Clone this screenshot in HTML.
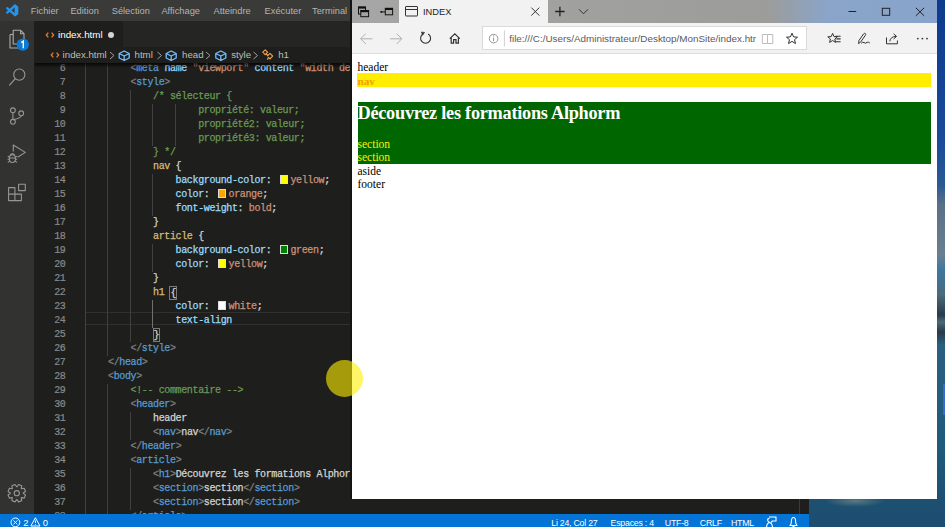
<!DOCTYPE html>
<html><head><meta charset="utf-8">
<style>
*{margin:0;padding:0;box-sizing:border-box}
html,body{width:945px;height:527px;overflow:hidden;position:relative;background:#1d4a6a;font-family:"Liberation Sans",sans-serif}
.a{position:absolute}
#wall{left:808px;top:0;width:137px;height:527px;background:radial-gradient(ellipse 30px 6px at 855px 501px,rgba(150,160,150,0.5),rgba(150,160,150,0) 100%),linear-gradient(180deg,#0d3a8e 0px,#1a4a9a 140px,#2a5a92 185px,#5a7088 205px,#6a7f8e 255px,#3e78a0 270px,#4a6a7a 295px,#2a3a4a 315px,#4a6a78 322px,#2a3a48 332px,#2a6080 345px,#1e5a7a 450px,#1d5070 499px,#1e4d70 527px);background-position:-808px 0,0 0;background-size:945px 527px,137px 527px;background-repeat:no-repeat}
#wall2{left:943px;top:384px;width:2px;height:31px;background:#3a68d0}
#vsc{left:0;top:0;width:808.6px;height:527px;background:#1e1f1c;overflow:hidden}
#title{left:0;top:0;width:808.6px;height:21px;background:#3a3b38}
.menu{top:0;height:22px;line-height:22px;font-size:9.3px;color:#b4b4b4}
#act{left:0;top:21px;width:34.4px;height:493px;background:#323330}
#tabs{left:34.4px;top:21px;width:775px;height:26px;background:#252623}
#tab1{left:34.4px;top:21px;width:88.6px;height:26px;background:#1e1f1c}
#crumbs{left:34.5px;top:47px;width:774px;height:16px;background:#1e1f1c}
#status{left:0;top:513.7px;width:808.6px;height:22px;background:#0474d6;color:#fff;font-size:8.2px}
.st{line-height:10px;font-size:8.8px;letter-spacing:-0.25px;color:#fff;white-space:nowrap}
.crumb{top:47px;height:16px;line-height:16px;font-size:9.7px;color:#bdbdbd;white-space:nowrap}
#editor{left:34.5px;top:63px;width:774px;height:451px;overflow:hidden}
.ln{position:absolute;left:0;width:31px;text-align:right;font-family:"Liberation Mono",monospace;font-size:10px;letter-spacing:-0.37px;color:#8a8a8a;-webkit-text-stroke:0.2px currentColor;height:14px;line-height:14px}
.cl{position:absolute;left:51px;white-space:pre;-webkit-text-stroke:0.25px currentColor;font-family:"Liberation Mono",monospace;font-size:10px;letter-spacing:-0.37px;color:#d4d4d4;height:14px;line-height:14px}
.g{position:absolute;width:1px;background:#404040}
.t{color:#808080}.n{color:#569cd6}.at{color:#9cdcfe}.s{color:#ce9178}.c{color:#6a9955}.se{color:#d7ba7d}.p{color:#9cdcfe}.v{color:#ce9178}
.sw{display:inline-block;width:8.3px;height:8.3px;border:1px solid #ddd;vertical-align:-1px;margin:0 2.6px 0 2.6px}
.bm{display:inline-block;height:14px;line-height:13px;vertical-align:top;border:1px solid #7a7a7a;margin:0 -1px 0 -0.5px;padding:0}
.act{color:#858585}
#browser{left:352px;top:0;width:585px;height:499px;background:#ffffff;overflow:hidden}
#btitle{left:0;top:0;width:585px;height:23px;background:linear-gradient(90deg,#a6a6a6 0%,#a0a09e 40%,#9c9c9a 71%,#8aa5c8 81%,#88a4cc 100%)}
#btab{left:47px;top:0;width:149px;height:23px;background:#f2f2f2}
#btool{left:0;top:23px;width:585px;height:30.5px;background:#f2f2f2;border-bottom:1px solid #dcdcdc}
#addr{left:129.6px;top:26px;width:325.4px;height:23.8px;background:#fff;border:1px solid #dadada}
.pg{position:absolute;left:5.5px;font-family:"Liberation Serif",serif;font-size:11.5px;line-height:14px;white-space:nowrap;color:#000}
</style></head><body>
<div id="wall" class="a"></div><div id="wall2" class="a"></div>
<div id="vsc" class="a">
  <div id="title" class="a"></div>
  <div class="a menu" style="left:30.8px">Fichier</div>
  <div class="a menu" style="left:70.4px">Edition</div>
  <div class="a menu" style="left:111.7px">Sélection</div>
  <div class="a menu" style="left:161.4px">Affichage</div>
  <div class="a menu" style="left:213.5px">Atteindre</div>
  <div class="a menu" style="left:264.6px">Exécuter</div>
  <div class="a menu" style="left:312px">Terminal</div>
  <div id="act" class="a"></div>
  <div id="tabs" class="a"></div>
  <div id="tab1" class="a"></div>
  <div id="crumbs" class="a"></div>
  <div id="editor" class="a">
<div style="position:absolute;left:51px;top:249.4px;width:720px;height:13px;border-top:1px solid #303030;border-bottom:1px solid #303030"></div>
<div class="g" style="left:50.3px;top:-1.5px;height:14px;background:#404040"></div>
<div class="g" style="left:72.8px;top:-1.5px;height:14px;background:#404040"></div>
<div class="g" style="left:50.3px;top:12.5px;height:14px;background:#404040"></div>
<div class="g" style="left:72.8px;top:12.5px;height:14px;background:#404040"></div>
<div class="g" style="left:50.3px;top:26.5px;height:14px;background:#404040"></div>
<div class="g" style="left:72.8px;top:26.5px;height:14px;background:#404040"></div>
<div class="g" style="left:95.3px;top:26.5px;height:14px;background:#404040"></div>
<div class="g" style="left:50.3px;top:40.5px;height:14px;background:#404040"></div>
<div class="g" style="left:72.8px;top:40.5px;height:14px;background:#404040"></div>
<div class="g" style="left:95.3px;top:40.5px;height:14px;background:#404040"></div>
<div class="g" style="left:117.9px;top:40.5px;height:14px;background:#404040"></div>
<div class="g" style="left:140.4px;top:40.5px;height:14px;background:#404040"></div>
<div class="g" style="left:50.3px;top:54.5px;height:14px;background:#404040"></div>
<div class="g" style="left:72.8px;top:54.5px;height:14px;background:#404040"></div>
<div class="g" style="left:95.3px;top:54.5px;height:14px;background:#404040"></div>
<div class="g" style="left:117.9px;top:54.5px;height:14px;background:#404040"></div>
<div class="g" style="left:140.4px;top:54.5px;height:14px;background:#404040"></div>
<div class="g" style="left:50.3px;top:68.5px;height:14px;background:#404040"></div>
<div class="g" style="left:72.8px;top:68.5px;height:14px;background:#404040"></div>
<div class="g" style="left:95.3px;top:68.5px;height:14px;background:#404040"></div>
<div class="g" style="left:117.9px;top:68.5px;height:14px;background:#404040"></div>
<div class="g" style="left:140.4px;top:68.5px;height:14px;background:#404040"></div>
<div class="g" style="left:50.3px;top:82.5px;height:14px;background:#404040"></div>
<div class="g" style="left:72.8px;top:82.5px;height:14px;background:#404040"></div>
<div class="g" style="left:95.3px;top:82.5px;height:14px;background:#404040"></div>
<div class="g" style="left:50.3px;top:96.5px;height:14px;background:#404040"></div>
<div class="g" style="left:72.8px;top:96.5px;height:14px;background:#404040"></div>
<div class="g" style="left:95.3px;top:96.5px;height:14px;background:#404040"></div>
<div class="g" style="left:50.3px;top:110.5px;height:14px;background:#404040"></div>
<div class="g" style="left:72.8px;top:110.5px;height:14px;background:#404040"></div>
<div class="g" style="left:95.3px;top:110.5px;height:14px;background:#404040"></div>
<div class="g" style="left:117.9px;top:110.5px;height:14px;background:#404040"></div>
<div class="g" style="left:50.3px;top:124.5px;height:14px;background:#404040"></div>
<div class="g" style="left:72.8px;top:124.5px;height:14px;background:#404040"></div>
<div class="g" style="left:95.3px;top:124.5px;height:14px;background:#404040"></div>
<div class="g" style="left:117.9px;top:124.5px;height:14px;background:#404040"></div>
<div class="g" style="left:50.3px;top:138.5px;height:14px;background:#404040"></div>
<div class="g" style="left:72.8px;top:138.5px;height:14px;background:#404040"></div>
<div class="g" style="left:95.3px;top:138.5px;height:14px;background:#404040"></div>
<div class="g" style="left:117.9px;top:138.5px;height:14px;background:#404040"></div>
<div class="g" style="left:50.3px;top:152.5px;height:14px;background:#404040"></div>
<div class="g" style="left:72.8px;top:152.5px;height:14px;background:#404040"></div>
<div class="g" style="left:95.3px;top:152.5px;height:14px;background:#404040"></div>
<div class="g" style="left:50.3px;top:166.5px;height:14px;background:#404040"></div>
<div class="g" style="left:72.8px;top:166.5px;height:14px;background:#404040"></div>
<div class="g" style="left:95.3px;top:166.5px;height:14px;background:#404040"></div>
<div class="g" style="left:50.3px;top:180.5px;height:14px;background:#404040"></div>
<div class="g" style="left:72.8px;top:180.5px;height:14px;background:#404040"></div>
<div class="g" style="left:95.3px;top:180.5px;height:14px;background:#404040"></div>
<div class="g" style="left:117.9px;top:180.5px;height:14px;background:#404040"></div>
<div class="g" style="left:50.3px;top:194.5px;height:14px;background:#404040"></div>
<div class="g" style="left:72.8px;top:194.5px;height:14px;background:#404040"></div>
<div class="g" style="left:95.3px;top:194.5px;height:14px;background:#404040"></div>
<div class="g" style="left:117.9px;top:194.5px;height:14px;background:#404040"></div>
<div class="g" style="left:50.3px;top:208.5px;height:14px;background:#404040"></div>
<div class="g" style="left:72.8px;top:208.5px;height:14px;background:#404040"></div>
<div class="g" style="left:95.3px;top:208.5px;height:14px;background:#404040"></div>
<div class="g" style="left:50.3px;top:222.5px;height:14px;background:#404040"></div>
<div class="g" style="left:72.8px;top:222.5px;height:14px;background:#404040"></div>
<div class="g" style="left:95.3px;top:222.5px;height:14px;background:#404040"></div>
<div class="g" style="left:50.3px;top:236.5px;height:14px;background:#404040"></div>
<div class="g" style="left:72.8px;top:236.5px;height:14px;background:#404040"></div>
<div class="g" style="left:95.3px;top:236.5px;height:14px;background:#404040"></div>
<div class="g" style="left:117.9px;top:236.5px;height:14px;background:#707070"></div>
<div class="g" style="left:50.3px;top:250.5px;height:14px;background:#404040"></div>
<div class="g" style="left:72.8px;top:250.5px;height:14px;background:#404040"></div>
<div class="g" style="left:95.3px;top:250.5px;height:14px;background:#404040"></div>
<div class="g" style="left:117.9px;top:250.5px;height:14px;background:#707070"></div>
<div class="g" style="left:50.3px;top:264.5px;height:14px;background:#404040"></div>
<div class="g" style="left:72.8px;top:264.5px;height:14px;background:#404040"></div>
<div class="g" style="left:95.3px;top:264.5px;height:14px;background:#404040"></div>
<div class="g" style="left:50.3px;top:278.5px;height:14px;background:#404040"></div>
<div class="g" style="left:72.8px;top:278.5px;height:14px;background:#404040"></div>
<div class="g" style="left:50.3px;top:292.5px;height:14px;background:#404040"></div>
<div class="g" style="left:50.3px;top:306.5px;height:14px;background:#404040"></div>
<div class="g" style="left:50.3px;top:320.5px;height:14px;background:#404040"></div>
<div class="g" style="left:72.8px;top:320.5px;height:14px;background:#404040"></div>
<div class="g" style="left:50.3px;top:334.5px;height:14px;background:#404040"></div>
<div class="g" style="left:72.8px;top:334.5px;height:14px;background:#404040"></div>
<div class="g" style="left:50.3px;top:348.5px;height:14px;background:#404040"></div>
<div class="g" style="left:72.8px;top:348.5px;height:14px;background:#404040"></div>
<div class="g" style="left:95.3px;top:348.5px;height:14px;background:#404040"></div>
<div class="g" style="left:50.3px;top:362.5px;height:14px;background:#404040"></div>
<div class="g" style="left:72.8px;top:362.5px;height:14px;background:#404040"></div>
<div class="g" style="left:95.3px;top:362.5px;height:14px;background:#404040"></div>
<div class="g" style="left:50.3px;top:376.5px;height:14px;background:#404040"></div>
<div class="g" style="left:72.8px;top:376.5px;height:14px;background:#404040"></div>
<div class="g" style="left:50.3px;top:390.5px;height:14px;background:#404040"></div>
<div class="g" style="left:72.8px;top:390.5px;height:14px;background:#404040"></div>
<div class="g" style="left:50.3px;top:404.5px;height:14px;background:#404040"></div>
<div class="g" style="left:72.8px;top:404.5px;height:14px;background:#404040"></div>
<div class="g" style="left:95.3px;top:404.5px;height:14px;background:#404040"></div>
<div class="g" style="left:50.3px;top:418.5px;height:14px;background:#404040"></div>
<div class="g" style="left:72.8px;top:418.5px;height:14px;background:#404040"></div>
<div class="g" style="left:95.3px;top:418.5px;height:14px;background:#404040"></div>
<div class="g" style="left:50.3px;top:432.5px;height:14px;background:#404040"></div>
<div class="g" style="left:72.8px;top:432.5px;height:14px;background:#404040"></div>
<div class="g" style="left:95.3px;top:432.5px;height:14px;background:#404040"></div>
<div class="g" style="left:50.3px;top:446.5px;height:14px;background:#404040"></div>
<div class="g" style="left:72.8px;top:446.5px;height:14px;background:#404040"></div>
<div class="ln" style="top:-1.5px">6</div>
<div class="cl" style="top:-1.5px">        <span class="t">&lt;</span><span class="n">meta</span> <span class="at">name</span> <span class="s">&quot;viewport&quot;</span> <span class="at">content</span> <span class="s">&quot;width de</span></div>
<div class="ln" style="top:12.5px">7</div>
<div class="cl" style="top:12.5px">        <span class="t">&lt;</span><span class="n">style</span><span class="t">&gt;</span></div>
<div class="ln" style="top:26.5px">8</div>
<div class="cl" style="top:26.5px">            <span class="c">/* sélecteur {</span></div>
<div class="ln" style="top:40.5px">9</div>
<div class="cl" style="top:40.5px">                    <span class="c">propriété: valeur;</span></div>
<div class="ln" style="top:54.5px">10</div>
<div class="cl" style="top:54.5px">                    <span class="c">propriété2: valeur;</span></div>
<div class="ln" style="top:68.5px">11</div>
<div class="cl" style="top:68.5px">                    <span class="c">propriété3: valeur;</span></div>
<div class="ln" style="top:82.5px">12</div>
<div class="cl" style="top:82.5px">            <span class="c">} */</span></div>
<div class="ln" style="top:96.5px">13</div>
<div class="cl" style="top:96.5px">            <span class="se">nav</span> {</div>
<div class="ln" style="top:110.5px">14</div>
<div class="cl" style="top:110.5px">                <span class="p">background-color</span>: <span class="sw" style="background:#ffff00"></span><span class="v">yellow</span>;</div>
<div class="ln" style="top:124.5px">15</div>
<div class="cl" style="top:124.5px">                <span class="p">color</span>: <span class="sw" style="background:#ffa500"></span><span class="v">orange</span>;</div>
<div class="ln" style="top:138.5px">16</div>
<div class="cl" style="top:138.5px">                <span class="p">font-weight</span>: <span class="v">bold</span>;</div>
<div class="ln" style="top:152.5px">17</div>
<div class="cl" style="top:152.5px">            }</div>
<div class="ln" style="top:166.5px">18</div>
<div class="cl" style="top:166.5px">            <span class="se">article</span> {</div>
<div class="ln" style="top:180.5px">19</div>
<div class="cl" style="top:180.5px">                <span class="p">background-color</span>: <span class="sw" style="background:#008000"></span><span class="v">green</span>;</div>
<div class="ln" style="top:194.5px">20</div>
<div class="cl" style="top:194.5px">                <span class="p">color</span>: <span class="sw" style="background:#ffff00"></span><span class="v">yellow</span>;</div>
<div class="ln" style="top:208.5px">21</div>
<div class="cl" style="top:208.5px">            }</div>
<div class="ln" style="top:222.5px">22</div>
<div class="cl" style="top:222.5px">            <span class="se">h1</span> <span class="bm">{</span></div>
<div class="ln" style="top:236.5px">23</div>
<div class="cl" style="top:236.5px">                <span class="p">color</span>: <span class="sw" style="background:#ffffff"></span><span class="v">white</span>;</div>
<div class="ln act" style="top:250.5px">24</div>
<div class="cl" style="top:250.5px">                <span class="p">text-align</span></div>
<div class="ln" style="top:264.5px">25</div>
<div class="cl" style="top:264.5px">            <span class="bm">}</span></div>
<div class="ln" style="top:278.5px">26</div>
<div class="cl" style="top:278.5px">        <span class="t">&lt;/</span><span class="n">style</span><span class="t">&gt;</span></div>
<div class="ln" style="top:292.5px">27</div>
<div class="cl" style="top:292.5px">    <span class="t">&lt;/</span><span class="n">head</span><span class="t">&gt;</span></div>
<div class="ln" style="top:306.5px">28</div>
<div class="cl" style="top:306.5px">    <span class="t">&lt;</span><span class="n">body</span><span class="t">&gt;</span></div>
<div class="ln" style="top:320.5px">29</div>
<div class="cl" style="top:320.5px">        <span class="c">&lt;!-- commentaire --&gt;</span></div>
<div class="ln" style="top:334.5px">30</div>
<div class="cl" style="top:334.5px">        <span class="t">&lt;</span><span class="n">header</span><span class="t">&gt;</span></div>
<div class="ln" style="top:348.5px">31</div>
<div class="cl" style="top:348.5px">            header</div>
<div class="ln" style="top:362.5px">32</div>
<div class="cl" style="top:362.5px">            <span class="t">&lt;</span><span class="n">nav</span><span class="t">&gt;</span>nav<span class="t">&lt;/</span><span class="n">nav</span><span class="t">&gt;</span></div>
<div class="ln" style="top:376.5px">33</div>
<div class="cl" style="top:376.5px">        <span class="t">&lt;/</span><span class="n">header</span><span class="t">&gt;</span></div>
<div class="ln" style="top:390.5px">34</div>
<div class="cl" style="top:390.5px">        <span class="t">&lt;</span><span class="n">article</span><span class="t">&gt;</span></div>
<div class="ln" style="top:404.5px">35</div>
<div class="cl" style="top:404.5px">            <span class="t">&lt;</span><span class="n">h1</span><span class="t">&gt;</span>Découvrez les formations Alphorm</div>
<div class="ln" style="top:418.5px">36</div>
<div class="cl" style="top:418.5px">            <span class="t">&lt;</span><span class="n">section</span><span class="t">&gt;</span>section<span class="t">&lt;/</span><span class="n">section</span><span class="t">&gt;</span></div>
<div class="ln" style="top:432.5px">37</div>
<div class="cl" style="top:432.5px">            <span class="t">&lt;</span><span class="n">section</span><span class="t">&gt;</span>section<span class="t">&lt;/</span><span class="n">section</span><span class="t">&gt;</span></div>
<div class="ln" style="top:446.5px">38</div>
<div class="cl" style="top:446.5px">        <span class="t">&lt;/</span><span class="n">article</span><span class="t">&gt;</span></div>
</div>
  <div class="a" style="left:34.5px;top:63px;width:774px;height:5px;background:linear-gradient(180deg,rgba(0,0,0,0.75),rgba(0,0,0,0))"></div>
  <div id="status" class="a"></div>
  <svg class="a" style="left:0;top:514px" width="60" height="13" viewBox="0 514 60 13">
    <g fill="none" stroke="#fff" stroke-width="1">
      <circle cx="15.4" cy="522.4" r="4.4"/>
      <path d="M13.4 520.4 L17.4 524.4 M17.4 520.4 L13.4 524.4"/>
      <path d="M35.4 517.8 L40 526 H30.8 Z"/>
      <path d="M35.4 520.5 V523 M35.4 524 V524.8"/>
    </g>
  </svg>
  <div class="a st" style="left:23.2px;top:518.3px;font-size:9.5px;color:#fff">2</div>
  <div class="a st" style="left:42.7px;top:518.3px;font-size:9.5px;color:#fff">0</div>
  <div class="a st" style="left:551.3px;top:518.3px">Li 24, Col 27</div>
  <div class="a st" style="left:610.6px;top:518.3px">Espaces : 4</div>
  <div class="a st" style="left:664.8px;top:518.3px">UTF-8</div>
  <div class="a st" style="left:699.8px;top:518.3px">CRLF</div>
  <div class="a st" style="left:731px;top:518.3px">HTML</div>
  <svg class="a" style="left:760px;top:514px" width="45" height="13" viewBox="760 514 45 13">
    <g fill="none" stroke="#fff" stroke-width="1.1" stroke-linejoin="round">
      <path d="M769 517 H776 V521 H772.5 L771 522.5"/>
      <path d="M766.5 527 Q767 523 769.5 522.5 Q772 523 772.5 527 M769.5 522 A1.9 1.9 0 1 1 769.5 518.2"/>
      <path d="M790 525.5 H797 Q795.6 524 795.6 521.5 Q795.6 517.5 793.5 517.5 Q791.4 517.5 791.4 521.5 Q791.4 524 790 525.5 Z M792.5 526.5 H794.5"/>
    </g>
  </svg>
  <div class="a" style="left:799px;top:499px;width:1px;height:15px;background:#3a3a3a"></div>

  <svg class="a" style="left:0;top:0" width="35" height="514" viewBox="0 0 35 514">
    <g fill="#2496ed">
      <path d="M14.6 4.6 L17.2 5.8 Q18.3 6.4 18.3 7.6 L18.3 13.2 Q18.3 14.4 17.2 15 L14.6 16.2 Z"/>
    </g>
    <g stroke="#2496ed" stroke-width="2.2" stroke-linecap="round" fill="none">
      <path d="M15.2 5.4 L7.2 12.6"/>
      <path d="M7.2 8.2 L15.2 15.2"/>
    </g>
    <g fill="none" stroke="#969696" stroke-width="1.1" stroke-linejoin="round">
      <path d="M13.2 30.3 H20.6 L24 33.7 V44 H13.2 Z" stroke="#aaaaaa"/>
      <path d="M20.6 30.3 V33.7 H24" stroke="#aaaaaa"/>
      <path d="M10 34.5 V48 H19.5" stroke="#aaaaaa"/>
      <path d="M10 34.5 H13.2" stroke="#aaaaaa"/>
      <circle cx="19.3" cy="74.6" r="5.6"/>
      <path d="M15.3 78.6 L9.3 85.4" stroke-width="1.3"/>
      <circle cx="12.9" cy="110.3" r="2.4"/>
      <circle cx="21.2" cy="113.3" r="2.4"/>
      <circle cx="12.9" cy="121.8" r="2.4"/>
      <path d="M12.9 112.7 V119.4"/>
      <path d="M21.2 115.7 Q21 118 13.4 119.6"/>
      <path d="M13.3 151.5 V145 L25.3 152.4 L17.6 157.2"/>
      <ellipse cx="12.4" cy="158.6" rx="3.1" ry="3.9"/>
      <path d="M10.2 155.2 Q12.4 152.6 14.6 155.2 M7.8 156.2 L9.4 157 M17 156.2 L15.4 157 M7.6 159.2 H9.3 M17.2 159.2 H15.5 M7.8 162.4 L9.6 161.2 M17 162.4 L15.2 161.2 M9.6 158 H15.2"/>
      <path d="M8.6 187.6 H14.9 V200.6 H8.6 Z M8.6 194.1 H21.4 V200.6 H14.9"/>
      <path d="M18.6 184.3 H25.3 V190.6 H18.6 Z"/>
    </g>
    <circle cx="22.8" cy="44.6" r="6.2" fill="#0e7ad3"/>
    <path d="M21.3 42.6 L23.3 41.1 V48.2" fill="none" stroke="#fff" stroke-width="1.4"/>
    <g transform="translate(16.8 493.2)" fill="none" stroke="#969696" stroke-width="1.1">
      <circle r="2.6"/>
      <path d="M6.40 0.17 L8.72 1.77 L7.42 4.91 L4.64 4.41 L4.41 4.64 L4.91 7.42 L1.77 8.72 L0.17 6.40 L-0.17 6.40 L-1.77 8.72 L-4.91 7.42 L-4.41 4.64 L-4.64 4.41 L-7.42 4.91 L-8.72 1.77 L-6.40 0.17 L-6.40 -0.17 L-8.72 -1.77 L-7.42 -4.91 L-4.64 -4.41 L-4.41 -4.64 L-4.91 -7.42 L-1.77 -8.72 L-0.17 -6.40 L0.17 -6.40 L1.77 -8.72 L4.91 -7.42 L4.41 -4.64 L4.64 -4.41 L7.42 -4.91 L8.72 -1.77 L6.40 -0.17 Z" stroke-linejoin="round"/>
    </g>
  </svg>
  <svg class="a" style="left:44px;top:29.5px" width="12" height="10" viewBox="0 0 12 10"><path d="M4.3 2.6 L2.3 5 L4.3 7.4 M7.6 2.6 L9.6 5 L7.6 7.4" fill="none" stroke="#e37933" stroke-width="1.35"/></svg>
  <div class="a" style="left:58px;top:22px;height:25px;line-height:25px;font-size:9.8px;color:#ffffff">index.html</div>
  <div class="a" style="left:108px;top:31.5px;width:6px;height:6px;border-radius:50%;background:#d4d4d4"></div>
  <svg class="a" style="left:48.5px;top:50.3px" width="12" height="10" viewBox="0 0 12 10"><path d="M4.3 2.6 L2.3 5 L4.3 7.4 M7.6 2.6 L9.6 5 L7.6 7.4" fill="none" stroke="#e37933" stroke-width="1.35"/></svg>
  <div class="a crumb" style="left:62.6px">index.html</div>
  <div class="a crumb" style="left:134.5px">html</div>
  <div class="a crumb" style="left:182.1px">head</div>
  <div class="a crumb" style="left:231.2px">style</div>
  <div class="a crumb" style="left:278.2px">h1</div>
  <svg class="a" style="left:0;top:45px" width="352" height="20" viewBox="0 45 352 20">
    <g fill="none" stroke="#a0a0a0" stroke-width="1">
      <path d="M110 52 L114 55.5 L110 59 M157.5 52 L161.5 55.5 L157.5 59 M206 52 L210 55.5 L206 59 M253.5 52 L257.5 55.5 L253.5 59"/>
    </g>
    <g fill="none" stroke="#75beff" stroke-width="1.3" stroke-linejoin="round">
      <path d="M119.2 53.5 L124.2 51 L129.2 53.5 V58 L124.2 60.5 L119.2 58 Z M119.2 53.5 L124.2 56 L129.2 53.5 M124.2 56 V60.5"/>
      <path d="M166.2 53.5 L171.2 51 L176.2 53.5 V58 L171.2 60.5 L166.2 58 Z M166.2 53.5 L171.2 56 L176.2 53.5 M171.2 56 V60.5"/>
      <path d="M215.8 53.5 L220.8 51 L225.8 53.5 V58 L220.8 60.5 L215.8 58 Z M215.8 53.5 L220.8 56 L225.8 53.5 M220.8 56 V60.5"/>
    </g>
    <g fill="none" stroke="#e89a48" stroke-width="1.2" stroke-linejoin="round">
      <path d="M265.2 49.8 L267.6 52.2 L265.2 54.6 L262.8 52.2 Z M267.2 56 L270 53.4 L272.6 56 L270 58.8 L268.6 57.4 M266.2 53.8 L268.4 56.2 M268.6 57.4 L267.4 59.6"/>
    </g>
  </svg>

</div>
<div id="browser" class="a">
  <div id="btitle" class="a"></div>
  <div id="btab" class="a"></div>
  <div id="btool" class="a"></div>
  <div id="addr" class="a"></div>
  <svg class="a" style="left:0;top:0" width="585" height="54" viewBox="352 0 585 54">
    <!-- tab set-aside icons -->
    <g fill="none" stroke="#111" stroke-width="1">
      <rect x="358.5" y="7" width="7" height="7"/>
      <rect x="360.8" y="10.5" width="7.8" height="6.2" fill="#a3a3a3"/>
    </g>
    <rect x="358.3" y="6.6" width="7.6" height="2" fill="#111"/>
    <rect x="360.5" y="10.2" width="8.3" height="2" fill="#111"/>
    <g fill="none" stroke="#111" stroke-width="1">
      <rect x="385.3" y="8.3" width="7.3" height="6.5"/>
      <path d="M380.5 11.9 H385"/>
    </g>
    <rect x="385" y="8" width="8" height="2" fill="#111"/>
    <circle cx="381.3" cy="11.9" r="0.9" fill="#111"/>
    <!-- tab icon -->
    <g fill="none" stroke="#333" stroke-width="1">
      <rect x="405.5" y="6.5" width="12" height="9.5" rx="0.5"/>
      <path d="M405.5 9.5 H417.5"/>
    </g>
    <text x="423" y="14.5" font-family="Liberation Sans" font-size="9.3" fill="#222">INDEX</text>
    <g fill="none" stroke="#333" stroke-width="1">
      <path d="M531.3 7.6 L539.3 15.6 M539.3 7.6 L531.3 15.6"/>
    </g>
    <g fill="none" stroke="#222" stroke-width="1.3">
      <path d="M559.9 6.8 V16.2 M555.2 11.5 H564.6"/>
    </g>
    <g fill="none" stroke="#333" stroke-width="1">
      <path d="M579 9.3 L583.5 13.8 L588 9.3"/>
    </g>
    <!-- window controls -->
    <g fill="none" stroke="#222" stroke-width="1">
      <path d="M848.5 11.5 H856.2"/>
      <rect x="882.3" y="8.3" width="7.4" height="7"/>
      <path d="M915.8 7.8 L924.2 15.8 M924.2 7.8 L915.8 15.8"/>
    </g>
    <!-- nav buttons -->
    <g fill="none" stroke="#b0b0b0" stroke-width="1">
      <path d="M372.4 38.8 H360.8 M365.8 33.6 L360.6 38.8 L365.8 44"/>
      <path d="M390 38.8 H401.6 M396.6 33.6 L401.8 38.8 L396.6 44"/>
    </g>
    <g fill="none" stroke="#333" stroke-width="1.1">
      <path d="M423.1 33.9 A5 5 0 1 0 428.1 33.9"/>
      <path d="M421.4 32 L424.6 32.4 L422.6 35.2 Z" fill="#333" stroke-width="0.6"/>
      <path d="M449.8 38.6 L454.8 33.8 L459.8 38.6 M451.2 37.6 V43.2 H453.6 V39.6 H456 V43.2 H458.4 V37.6" stroke-width="1.2"/>
    </g>
    <!-- address bar icons -->
    <g fill="none" stroke="#8a8a8a" stroke-width="0.9">
      <circle cx="493.6" cy="38.6" r="4.3"/>
      <path d="M493.6 37.6 V41.2"/>
    </g>
    <circle cx="493.6" cy="35.9" r="0.6" fill="#8a8a8a"/>
    <path d="M504.4 30.5 V46.5" stroke="#d0d0d0" stroke-width="1"/>
    <text x="509.2" y="41.8" font-family="Liberation Sans" font-size="9.9" fill="#5a5a5a">file:///C:/Users/Administrateur/Desktop/MonSite/index.htr</text>
    <rect x="756.2" y="30" width="5" height="17" fill="#fff"/>
    <g fill="none" stroke="#bdbdbd" stroke-width="1">
      <path d="M762.3 34.5 H767.5 V43.5 H762.3 Z M767.5 34.5 H772.8 V43.5 H767.5"/>
    </g>
    <g fill="none" stroke="#333" stroke-width="1" stroke-linejoin="round">
      <path d="M792 33.2 L793.6 36.9 L797.5 37.2 L794.5 39.7 L795.5 43.6 L792 41.4 L788.5 43.6 L789.5 39.7 L786.5 37.2 L790.4 36.9 Z"/>
      <path d="M832.6 33.4 L834 36.6 L837.4 36.8 L834.8 39 L835.6 42.4 L832.6 40.5 L829.6 42.4 L830.4 39 L827.8 36.8 L831.2 36.6 Z"/>
      <path d="M835.4 36.2 H840.6 M836.4 38.9 H840.6 M836 41.7 H840.6" stroke-width="1.1"/>
      <path d="M858.6 43.6 L858.9 40.6 L863.6 33.9 Q864.5 32.9 865.4 33.6 Q866.1 34.4 865.3 35.4 L860.6 42.1 Z M861.2 43.3 Q862.6 41.6 864 42.6 Q865.6 43.9 867.2 42.3 Q868.4 41.8 869.8 43"/>
      <path d="M886.5 37.5 V43.8 H897.4 V40.5"/>
      <path d="M889.8 41.4 Q890.4 36.6 896 36.4 M893.6 33.8 L896.6 36.4 L893.6 39"/>
    </g>
    <g fill="#333">
      <circle cx="917.8" cy="38.6" r="0.9"/>
      <circle cx="922.4" cy="38.6" r="0.9"/>
      <circle cx="927" cy="38.6" r="0.9"/>
    </g>
  </svg>
  <div class="pg" style="top:59.8px">header</div>
  <div class="a" style="left:5px;top:72.9px;width:574px;height:13.9px;background:#ffee00"></div>
  <div class="pg" style="top:73.5px;color:#f0a000;font-weight:bold;font-size:11.2px">nav</div>
  <div class="a" style="left:5.6px;top:101.8px;width:573.4px;height:62px;background:#006600"></div>
  <div class="pg" style="top:102.7px;font-size:18.3px;letter-spacing:-0.27px;line-height:20px;font-weight:bold;color:#fff">Découvrez les formations Alphorm</div>
  <div class="pg" style="top:136.9px;color:#ffee00">section</div>
  <div class="pg" style="top:149.8px;color:#ffee00">section</div>
  <div class="pg" style="top:164.3px">aside</div>
  <div class="pg" style="top:177.3px">footer</div>
</div>
<div class="a" style="left:349.5px;top:0;width:2.5px;height:499px;background:#141414"></div>
<div class="a" style="left:325.9px;top:359.9px;width:37.2px;height:37.2px;border-radius:50%;background:rgba(255,238,0,0.6)"></div>
</body></html>
